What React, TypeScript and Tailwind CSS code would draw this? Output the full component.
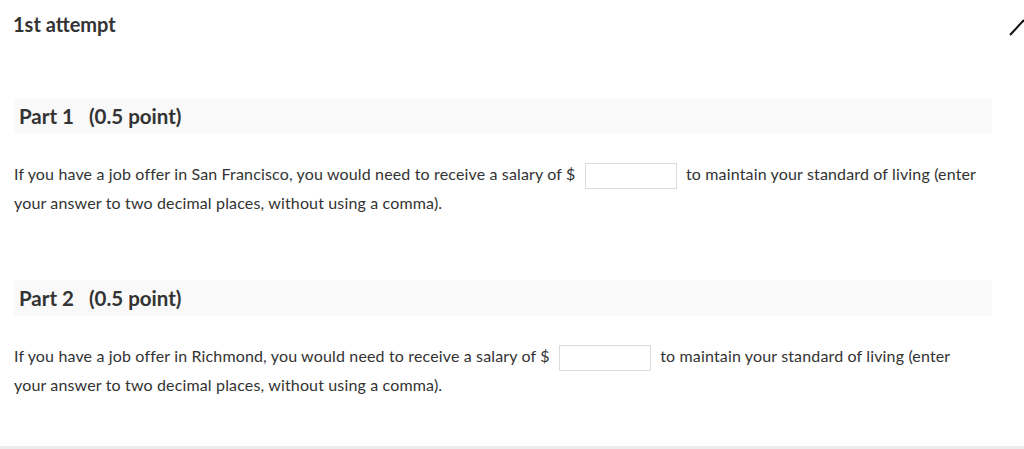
import React from "react";

function Part({ n, city }: { n: number; city: string }) {
  return (
    <div>
      <div className="bg-[#f9f9f9] h-[36px] flex items-center pl-[5px]">
        <span className="font-bold text-[20.5px] text-[#333] leading-none">
          Part {n}
          <span className="ml-[15px]">(0.5 point)</span>
        </span>
      </div>
      <p className="text-[16px] leading-[28px] text-[#333] mt-[26px] mr-[8px] tracking-[0.15px]">
        If you have a job offer in {city}, you would need to receive a salary of ${" "}
        <input
          type="text"
          className="inline-block align-middle w-[92px] h-[26px] border border-[#dcdcdc] bg-white mx-[5px] outline-none"
        />{" "}
        to maintain your standard of living (enter your answer to two decimal places, without using a comma).
      </p>
    </div>
  );
}

export default function App() {
  return (
    <div
      className="w-[1024px] h-[449px] bg-white relative overflow-hidden"
      style={{ fontFamily: "Lato, 'Open Sans', sans-serif" }}
    >
      <div className="pl-[14px] pr-[32px] pt-[11px]">
        <h1 className="font-bold text-[20px] text-[#333] leading-[26px] -ml-[1px]">1st attempt</h1>
        <div className="mt-[61px]">
          <Part n={1} city="San Francisco" />
        </div>
        <div className="mt-[63px]">
          <Part n={2} city="Richmond" />
        </div>
      </div>
      <svg className="absolute top-[18px] left-[1008px]" width="16" height="20" viewBox="0 0 16 20">
        <line x1="2" y1="17" x2="16" y2="2" stroke="#111" strokeWidth="2" />
      </svg>
      <div className="absolute left-0 right-0 bottom-0 h-[3px] bg-[#ececec]" />
    </div>
  );
}
